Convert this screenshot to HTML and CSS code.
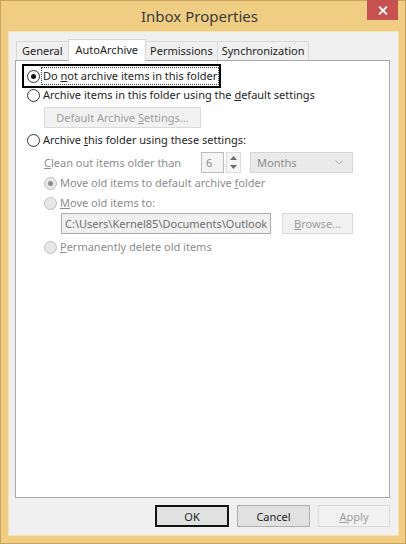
FILE: index.html
```html
<!DOCTYPE html>
<html lang="en">
<head>
<meta charset="UTF-8">
<meta name="viewport" content="width=device-width, initial-scale=1.0">
<link rel="stylesheet" href="styles.css">
<title>Inbox Properties</title>
</head>
<body>
  <div class="window">
    <div class="titlebar">
      <span></span>
      <span class="title">Inbox Properties</span>
      <div class="close">
        <svg width="10" height="9" viewBox="0 0 10 9"><path d="M1 0.5 L9 8.5 M9 0.5 L1 8.5" stroke="#fff" stroke-width="1.8"/></svg>
      </div>
    </div>
    <div class="client">
      <div class="tabs">
        <div class="tab">General</div>
        <div class="tab active">AutoArchive</div>
        <div class="tab">Permissions</div>
        <div class="tab">Synchronization</div>
      </div>
      <div class="panel">
        <div class="focus-row">
          <span class="radio checked"></span>
          <span class="label dotted">Do <u>n</u>ot archive items in this folder</span>
        </div>
        <div class="row top">
          <span class="radio"></span>
          <span class="label">Archive items in this folder using the <u>d</u>efault settings</span>
        </div>
        <div class="btn disabled wide"><span>Default Archive <u>S</u>ettings...</span></div>
        <div class="row top r3">
          <span class="radio"></span>
          <span class="label">Archive <u>t</u>his folder using these settings:</span>
        </div>
        <div class="clean">
          <span class="muted clean-label"><u>C</u>lean out items older than</span>
          <span class="spin-box">6</span>
          <span class="spin-arrows">
            <svg width="7" height="4" viewBox="0 0 7 4"><path d="M0 4 L3.5 0 L7 4 Z" fill="#6a6a6a"/></svg>
            <svg width="7" height="4" viewBox="0 0 7 4"><path d="M0 0 L3.5 4 L7 0 Z" fill="#6a6a6a"/></svg>
          </span>
          <span class="select">Months
            <svg width="8" height="5" viewBox="0 0 8 5"><path d="M0.5 0.5 L4 4 L7.5 0.5" stroke="#b0b0b0" fill="none"/></svg>
          </span>
        </div>
        <div class="row sub s1">
          <span class="radio off checked"></span>
          <span class="label muted">Move old items to default archive <u>f</u>older</span>
        </div>
        <div class="row sub s2">
          <span class="radio off"></span>
          <span class="label muted"><u>M</u>ove old items to:</span>
        </div>
        <div class="path-row">
          <span class="path">C:\Users\Kernel85\Documents\Outlook (</span>
          <div class="btn disabled browse"><span><u>B</u>rowse...</span></div>
        </div>
        <div class="row sub s2">
          <span class="radio off"></span>
          <span class="label muted"><u>P</u>ermanently delete old items</span>
        </div>
      </div>
      <div class="actions">
        <div class="btn default ok">OK</div>
        <div class="btn cancel">Cancel</div>
        <div class="btn disabled apply"><span><u>A</u>pply</span></div>
      </div>
    </div>
  </div>
</body>
</html>
```

FILE: styles.css
```css
body {
  margin: 0;
  font-family: "Noto Sans", "Open Sans", sans-serif;
  font-size: 11px;
  color: #1e1e1e;
}
.window {
  width: 406px;
  height: 544px;
  box-sizing: border-box;
  background-color: #efcd83;
  border: 1px solid #c9a25e;
  display: flex;
  flex-direction: column;
}
.titlebar {
  height: 31px;
  display: grid;
  grid-template-columns: 1fr auto 1fr;
  padding-right: 7px;
}
.title {
  font-size: 15px;
  color: #3c3c3c;
  line-height: 31px;
}
.close {
  justify-self: end;
  width: 31px;
  height: 20px;
  margin-top: -1px;
  background-color: #c75050;
  display: flex;
  align-items: center;
  justify-content: center;
}
.client {
  flex: 1;
  margin: 0 7px 8px 8px;
  background-color: #f0f0f0;
  box-shadow: 0 0 0 1px #f7e3b1;
  padding: 0 8px 0 6px;
  display: flex;
  flex-direction: column;
}
.tabs {
  display: flex;
  height: 21px;
  margin-top: 7px;
  padding-left: 1px;
  position: relative;
  z-index: 1;
}
.tab {
  height: 18px;
  margin-top: 2px;
  padding: 0 5px;
  border: 1px solid #d9d9d9;
  border-bottom: none;
  background-color: #f0f0f0;
  line-height: 18px;
  color: #222;
}
.tab + .tab {
  border-left: none;
}
.tab.active {
  height: 22px;
  margin-top: 0;
  margin-left: -1px;
  margin-right: -1px;
  padding: 0 7px;
  background-color: #fff;
  border-left: 1px solid #d9d9d9;
  line-height: 19px;
}
.tab.active + .tab {
  border-left: 1px solid #d9d9d9;
  padding: 0 4px;
}
.tab.active + .tab + .tab {
  padding: 0 4px;
}
.panel {
  flex: 1;
  background-color: #fff;
  border: 1px solid #a9a9a9;
  display: flex;
  flex-direction: column;
  align-items: flex-start;
}
.focus-row {
  margin: 3px 0 0 6px;
  height: 24px;
  box-sizing: border-box;
  border: 2px solid #000;
  padding: 0 2px 0 3px;
  display: flex;
  align-items: center;
}
.radio {
  width: 11px;
  height: 11px;
  border: 1px solid #333;
  border-radius: 50%;
  background-color: #fff;
  display: flex;
  align-items: center;
  justify-content: center;
  flex: none;
}
.radio.checked::after {
  content: "";
  width: 5px;
  height: 5px;
  border-radius: 50%;
  background-color: #111;
}
.radio.off {
  border-color: #bdbdbd;
  background-color: #e8e8e8;
}
.radio.off.checked::after {
  background-color: #8e8e8e;
}
.label {
  margin-left: 3px;
  line-height: 14px;
  white-space: nowrap;
}
.dotted {
  outline: 1px dotted #444;
  outline-offset: 1px;
}
.muted {
  color: #8c8c8c;
}
.row {
  height: 14px;
  display: flex;
  align-items: center;
}
.row.top {
  margin-left: 11px;
}
.row.r3 {
  margin-top: 5px;
}
.row.sub {
  margin-left: 28px;
}
.row.s1 {
  margin-top: 3px;
}
.row.s2 {
  margin-top: 6px;
}
.btn {
  height: 22px;
  width: 75px;
  box-sizing: border-box;
  background-color: #e1e1e1;
  border: 1px solid #adadad;
  display: flex;
  align-items: center;
  justify-content: center;
  white-space: nowrap;
}
.btn.disabled {
  background-color: #f1f1f1;
  border-color: #dadada;
  color: #9d9d9d;
}
.btn.default {
  border: 2px solid #111;
}
.btn.wide {
  width: 157px;
  height: 21px;
  margin: 5px 0 0 28px;
}
.clean {
  margin: 5px 0 0 28px;
  height: 21px;
  display: flex;
  align-items: center;
}
.clean-label {
  width: 157px;
}
.spin-box {
  width: 23px;
  height: 21px;
  box-sizing: border-box;
  border: 1px solid #bcbcbc;
  background-color: #f4f4f4;
  color: #8c8c8c;
  padding-left: 4px;
  line-height: 19px;
}
.spin-arrows {
  width: 15px;
  height: 21px;
  margin-left: 2px;
  box-sizing: border-box;
  border: 1px solid #dcdcdc;
  background-color: #f4f4f4;
  display: flex;
  flex-direction: column;
  align-items: center;
  justify-content: space-around;
}
.select {
  width: 103px;
  height: 21px;
  margin-left: 9px;
  box-sizing: border-box;
  border: 1px solid #d6d6d6;
  background-color: #eaeaea;
  color: #8c8c8c;
  padding: 0 9px 0 6px;
  display: flex;
  align-items: center;
  justify-content: space-between;
}
.path-row {
  margin: 3px 0 0 45px;
  display: flex;
  align-items: center;
}
.path {
  width: 210px;
  height: 21px;
  box-sizing: border-box;
  border: 1px solid #acacac;
  background-color: #f0f0f0;
  color: #6f6f6f;
  padding-left: 3px;
  line-height: 19px;
  white-space: nowrap;
  overflow: hidden;
}
.btn.browse {
  width: 71px;
  height: 21px;
  margin-left: 11px;
}
.actions {
  height: 37px;
  box-sizing: border-box;
  padding: 7px 0 0 0;
  display: flex;
  justify-content: flex-end;
  gap: 8px;
}
.actions .ok {
  width: 74px;
}
.actions .cancel {
  width: 73px;
}
.actions .apply {
  width: 72px;
}
```
